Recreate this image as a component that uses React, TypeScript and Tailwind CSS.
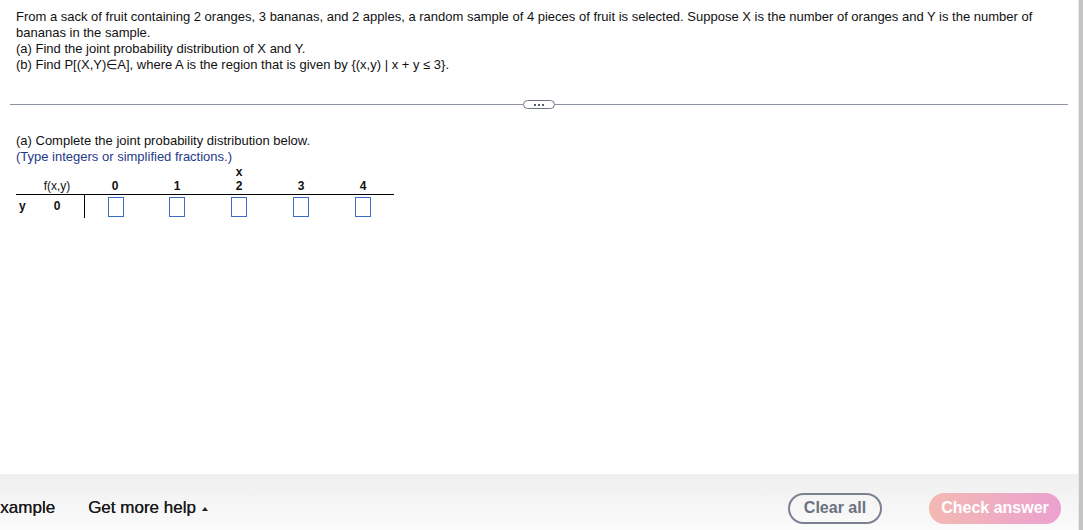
import React from 'react';

const cols = ['0', '1', '2', '3', '4'];

const AnswerBox: React.FC = () => (
    <span className="inline-block w-[16px] h-[20px] border border-[#3b6dc6] bg-white" />
);

const App: React.FC = () => {
    return (
        <div className="flex h-[530px] w-full overflow-hidden bg-white text-[#111] font-['Liberation_Sans',Arial,sans-serif]">
            <div className="flex flex-1 flex-col min-w-0">
                {/* Question */}
                <div className="flex-1 min-h-0">
                    <div className="px-4 pt-[9px] text-[13px] leading-[16px]">
                        <p>From a sack of fruit containing 2 oranges, 3 bananas, and 2 apples, a random sample of 4 pieces of fruit is selected. Suppose X is the number of oranges and Y is the number of bananas in the sample.</p>
                        <p>(a) Find the joint probability distribution of X and Y.</p>
                        <p>(b) Find P[(X,Y)∈A], where A is the region that is given by {'{'}(x,y) | x + y ≤ 3{'}'}.</p>
                    </div>

                    <div className="flex items-center mt-[27px] ml-[10px] mr-[10px]">
                        <div className="flex-1 h-px bg-[#8b93a3]" />
                        <div className="flex items-center justify-center gap-[2px] w-[32px] h-[9px] rounded-full border border-[#6f7787]">
                            <span className="w-[2px] h-[2px] bg-[#555e6e]" />
                            <span className="w-[2px] h-[2px] bg-[#555e6e]" />
                            <span className="w-[2px] h-[2px] bg-[#555e6e]" />
                        </div>
                        <div className="flex-1 h-px bg-[#8b93a3]" />
                    </div>

                    <div className="px-4 mt-[24px] text-[13px] leading-[16px]">
                        <p>(a) Complete the joint probability distribution below.</p>
                        <p className="text-[#1f3a8a]">(Type integers or simplified fractions.)</p>

                        <div className="w-[378px] grid grid-cols-[14px_54px_62px_62px_62px_62px_62px] text-[12px]">
                            <div className="col-span-4" />
                            <div className="text-center font-bold leading-[14px]">x</div>
                            <div className="col-span-2" />

                            <div />
                            <div className="text-center leading-[14px] pb-[1px] border-b border-black">f(x,y)</div>
                            {cols.map((c) => (
                                <div key={c} className="text-center font-bold leading-[14px] pb-[1px] border-b border-black">{c}</div>
                            ))}

                            <div className="font-bold text-[12px] leading-[22px] border-t border-black -mt-px pl-[3px]">y</div>
                            <div className="text-center font-bold leading-[22px]">0</div>
                            {cols.map((c, i) => (
                                <div key={c} className={`flex justify-center pt-[2px] h-[23px] ${i === 0 ? 'border-l border-black' : ''}`}>
                                    <AnswerBox />
                                </div>
                            ))}
                        </div>
                    </div>
                </div>

                {/* Footer */}
                <div className="h-[56px] shrink-0 flex items-center pt-[12px] bg-gradient-to-b from-[#efefef] to-[#fbfbfb] text-[17px] text-[#1a1a1a]">
                    <span className="ml-[-11px] [text-shadow:0_0_0.4px_#1a1a1a]">Example</span>
                    <button className="ml-[33px] flex items-center gap-[6px] [text-shadow:0_0_0.4px_#1a1a1a]">
                        Get more help
                        <span className="inline-block w-0 h-0 border-l-[3px] border-r-[3px] border-b-[4px] border-l-transparent border-r-transparent border-b-[#222] mt-[2px]" />
                    </button>
                    <div className="flex-1" />
                    <button className="w-[94px] h-[31px] rounded-full border-2 border-[#7b8191] text-[#6b7180] text-[16px] font-semibold">
                        Clear all
                    </button>
                    <button className="ml-[47px] mr-[17px] w-[132px] h-[31px] rounded-full bg-gradient-to-r from-[#f3b9b2] to-[#eba1cf] text-white text-[16px] font-bold">
                        Check answer
                    </button>
                </div>
            </div>
            <div className="w-[5px] shrink-0 border-l border-[#e9e9e9] bg-[#c3c3c3]" />
        </div>
    );
};

export default App;
